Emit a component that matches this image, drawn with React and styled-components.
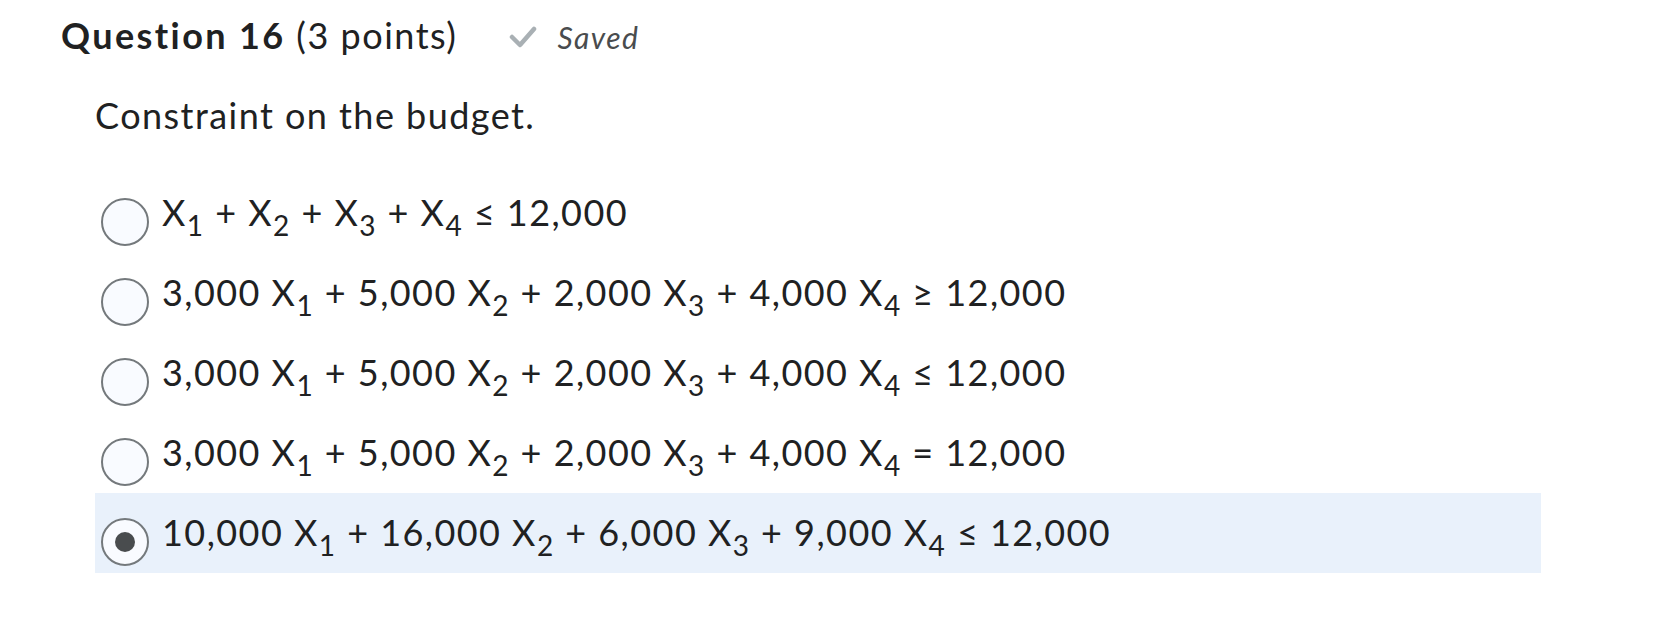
import React from "react";
import styled, { createGlobalStyle } from "styled-components";

const GlobalStyle = createGlobalStyle`
  html, body {
    margin: 0;
    padding: 0;
    background: #ffffff;
  }
  body {
    font-family: Lato, "Open Sans", "Liberation Sans", sans-serif;
    color: #202122;
  }
`;

const Page = styled.div`
  padding: 14px 113px 40px 61px;
`;

const Header = styled.div`
  display: flex;
  align-items: baseline;
`;

const Title = styled.h2`
  margin: 0;
  font-size: 36px;
  line-height: 42px;
  font-weight: 400;
  letter-spacing: 1.5px;
  color: #202122;
`;

const Strong = styled.strong`
  font-weight: 700;
  letter-spacing: 2.4px;
`;

const Status = styled.div`
  display: flex;
  align-items: baseline;
  gap: 20px;
  margin-left: 52px;
  font-size: 30px;
  font-style: italic;
  letter-spacing: 1.4px;
  color: #494c4e;
`;

const Check = styled.svg`
  width: 28px;
  height: 23px;
  align-self: center;
  position: relative;
  top: -1px;
`;

const Body = styled.div`
  margin-left: 34px;
`;

const Prompt = styled.p`
  margin: 38px 0 0 0;
  font-size: 36px;
  line-height: 43px;
  letter-spacing: 1.45px;
`;

const Options = styled.div`
  margin-top: 36px;
  display: flex;
  flex-direction: column;
`;

const Row = styled.label`
  display: flex;
  align-items: flex-start;
  height: 80px;
  box-sizing: border-box;
  padding: 17px 0 0 6px;
  background: ${(p) => (p.$selected ? "#e9f1fb" : "transparent")};
  cursor: pointer;
`;

const Radio = styled.span`
  flex: none;
  width: 48px;
  height: 48px;
  box-sizing: border-box;
  margin-top: 8px;
  border-radius: 50%;
  border: 2px solid #74797c;
  background: #f9fbff;
  display: flex;
  align-items: center;
  justify-content: center;
`;

const Dot = styled.span`
  width: 20px;
  height: 20px;
  border-radius: 50%;
  background: #494c4e;
`;

const OptionText = styled.span`
  margin-left: 13px;
  font-size: 36px;
  line-height: 44px;
  letter-spacing: 1.45px;
  color: #202122;
  white-space: nowrap;
`;

const Sub = styled.sub`
  font-size: 28px;
  line-height: 0;
  vertical-align: -10px;
`;

const options = [
  { terms: [["", "1"], ["", "2"], ["", "3"], ["", "4"]], op: "≤", rhs: "12,000" },
  { terms: [["3,000", "1"], ["5,000", "2"], ["2,000", "3"], ["4,000", "4"]], op: "≥", rhs: "12,000" },
  { terms: [["3,000", "1"], ["5,000", "2"], ["2,000", "3"], ["4,000", "4"]], op: "≤", rhs: "12,000" },
  { terms: [["3,000", "1"], ["5,000", "2"], ["2,000", "3"], ["4,000", "4"]], op: "=", rhs: "12,000" },
  { terms: [["10,000", "1"], ["16,000", "2"], ["6,000", "3"], ["9,000", "4"]], op: "≤", rhs: "12,000", selected: true },
];

function Expression({ terms, op, rhs }) {
  return (
    <OptionText>
      {terms.map(([coef, idx], i) => (
        <React.Fragment key={i}>
          {i > 0 ? " + " : ""}
          {coef ? `${coef} ` : ""}X<Sub>{idx}</Sub>
        </React.Fragment>
      ))}
      {` ${op} ${rhs}`}
    </OptionText>
  );
}

export default function App() {
  return (
    <>
      <GlobalStyle />
      <Page>
        <Header>
          <Title>
            <Strong>Question 16</Strong> (3 points)
          </Title>
          <Status>
            <Check viewBox="0 0 28 23" aria-hidden="true">
              <path
                d="M3 12 L11 20 L25 4"
                fill="none"
                stroke="#a9b0b4"
                strokeWidth="4.5"
                strokeLinecap="round"
                strokeLinejoin="round"
              />
            </Check>
            <span>Saved</span>
          </Status>
        </Header>
        <Body>
          <Prompt>Constraint on the budget.</Prompt>
          <Options>
            {options.map((o, i) => (
              <Row key={i} $selected={o.selected}>
                <Radio>{o.selected && <Dot />}</Radio>
                <Expression terms={o.terms} op={o.op} rhs={o.rhs} />
              </Row>
            ))}
          </Options>
        </Body>
      </Page>
    </>
  );
}
